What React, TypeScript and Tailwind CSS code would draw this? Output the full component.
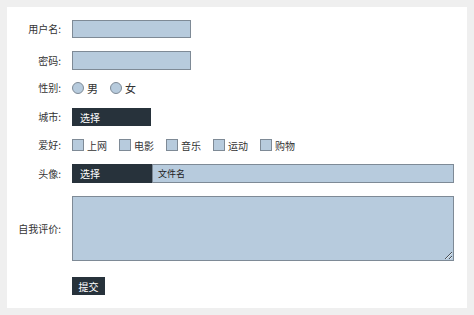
import React from "react"

const font = { fontFamily: '"Microsoft YaHei", "Noto Sans CJK SC", sans-serif' }

function Label({ children }: { children: React.ReactNode }) {
  return <div className="w-[57px] shrink-0 pr-[3px] text-right text-[10px] leading-none text-[#333]">{children}</div>
}

function Box({ round }: { round?: boolean }) {
  return (
    <span
      className={
        "inline-block h-[12px] w-[12px] border border-[#7e8a96] bg-[#b7cbdd] " +
        (round ? "rounded-full" : "")
      }
    />
  )
}

export default function App() {
  const hobbies = ["上网", "电影", "音乐", "运动", "购物"]

  return (
    <div className="h-[315px] w-[474px] bg-[#efefef] p-[7px]" style={font}>
      <div className="flex h-[301px] w-[460px] flex-col bg-white pt-[13px]">
        {/* 用户名 */}
        <div className="flex h-[18px] items-center">
          <Label>用户名:</Label>
          <div className="ml-[8px] h-[18px] w-[119px] border border-[#7e8a96] bg-[#b7cbdd]" />
        </div>

        {/* 密码 */}
        <div className="mt-[13px] flex h-[19px] items-center">
          <Label>密码:</Label>
          <div className="ml-[8px] h-[19px] w-[119px] border border-[#7e8a96] bg-[#b7cbdd]" />
        </div>

        {/* 性别 */}
        <div className="mt-[9px] flex h-[18px] items-center">
          <Label>性别:</Label>
          <div className="ml-[8px] flex items-center text-[11px] text-[#333]">
            <Box round />
            <span className="ml-[3px]">男</span>
            <span className="ml-[12px] flex items-center">
              <Box round />
              <span className="ml-[3px]">女</span>
            </span>
          </div>
        </div>

        {/* 城市 */}
        <div className="mt-[11px] flex h-[18px] items-center">
          <Label>城市:</Label>
          <div className="ml-[8px] flex h-[18px] w-[79px] items-center bg-[#27323b] pl-[8px] text-[10px] text-white">
            选择
          </div>
        </div>

        {/* 爱好 */}
        <div className="mt-[10px] flex h-[18px] items-center">
          <Label>爱好:</Label>
          <div className="ml-[8px] flex items-center gap-[12px] text-[10px] text-[#333]">
            {hobbies.map((h) => (
              <span key={h} className="flex items-center">
                <Box />
                <span className="ml-[3px]">{h}</span>
              </span>
            ))}
          </div>
        </div>

        {/* 头像 */}
        <div className="mt-[10px] flex h-[19px] items-center">
          <Label>头像:</Label>
          <div className="ml-[8px] flex h-[19px] w-[382px] text-[10px]">
            <div className="flex w-[80px] items-center bg-[#27323b] pl-[8px] text-white">选择</div>
            <div className="flex flex-1 items-center border border-[#7e8a96] bg-[#b7cbdd] pl-[5px] text-[9px] text-[#222]">
              文件名
            </div>
          </div>
        </div>

        {/* 自我评价 */}
        <div className="mt-[13px] flex h-[65px] items-center">
          <Label>自我评价:</Label>
          <textarea className="ml-[8px] h-[65px] w-[382px] border border-[#7e8a96] bg-[#b7cbdd] outline-none" />
        </div>

        {/* 提交 */}
        <div className="mt-[16px] flex h-[18px] items-center">
          <div className="w-[57px]" />
          <button className="ml-[8px] flex h-[18px] w-[33px] items-center justify-center bg-[#27323b] text-[10px] text-white">
            提交
          </button>
        </div>
      </div>
    </div>
  )
}
